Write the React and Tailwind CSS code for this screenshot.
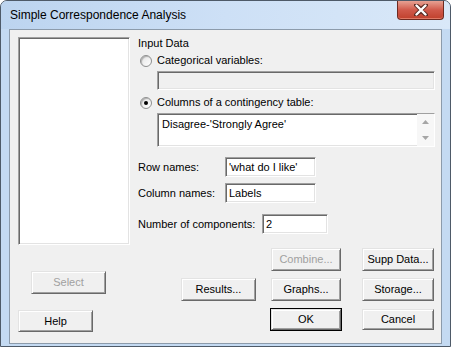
const sunken =
  'border border-t-[#a0a0a0] border-l-[#a0a0a0] border-r-white border-b-white shadow-[inset_1px_1px_0_#696969,inset_-1px_-1px_0_#e3e3e3]'

const btnBase =
  'flex items-center justify-center bg-[#f0f0f0] border border-t-[#e3e3e3] border-l-[#e3e3e3] border-r-[#696969] border-b-[#696969] shadow-[inset_1px_1px_0_#ffffff,inset_-1px_-1px_0_#a0a0a0]'

const Btn = ({ children, w = 'w-[75px]', h = 'h-[23px]', disabled, isDefault, className = '' }) => (
  <div
    className={`${w} ${h} ${className} ${
      isDefault ? 'outline outline-1 outline-black' : ''
    } ${btnBase} ${disabled ? 'text-[#a0a0a0]' : 'text-black'}`}
  >
    {children}
  </div>
)

const Radio = ({ checked }) => (
  <div className="ml-[2px] w-[12px] h-[12px] rounded-full border border-[#8e8f8f] bg-gradient-to-br from-[#e3e3e3] to-white flex items-center justify-center shadow-[inset_1px_1px_1px_#b0b0b0]">
    {checked && <div className="w-[4px] h-[4px] rounded-full bg-black" />}
  </div>
)

const Field = ({ w, h = 'h-[20px]', value }) => (
  <div className={`${w} ${h} ${sunken} bg-white pl-[3px] flex items-center`}>
    {value}
  </div>
)

export default function App() {
  return (
    <div
      className="w-[451px] h-[347px] border border-[#4e5a68] rounded-t-[7px] bg-[#c4daf2] flex flex-col overflow-hidden text-[11px] leading-[13px] text-black"
      style={{ fontFamily: '"Liberation Sans", Arial, sans-serif' }}
    >
      {/* title bar */}
      <div className="h-[28px] flex justify-between items-start bg-gradient-to-r from-[#bcd4ef] via-[#cde0f6] to-[#d9e8f8]">
        <div className="pl-[9px] pt-[7px] text-[12px] leading-[14px] text-black">
          Simple Correspondence Analysis
        </div>
        <div className="mr-[6px] w-[47px] h-[19px] rounded-b-[4px] border border-t-0 border-[#6e2a20] bg-gradient-to-b from-[#e6a193] via-[#d0594a] to-[#c0402c] flex items-center justify-center shadow-[inset_0_-1px_0_#e07a66]">
          <svg width="14" height="12" viewBox="0 0 14 12">
            <path
              d="M2 1 L7 5 L12 1 M2 11 L7 7 L12 11 M2 1 L12 11 M12 1 L2 11"
              stroke="#5a2a22"
              strokeWidth="4"
              strokeLinecap="round"
              fill="none"
            />
            <path
              d="M2.5 1.5 L11.5 10.5 M11.5 1.5 L2.5 10.5"
              stroke="#ffffff"
              strokeWidth="2.4"
              strokeLinecap="round"
              fill="none"
            />
          </svg>
        </div>
      </div>

      {/* client area */}
      <div className="mx-[8px] h-[315px] border border-[#8c9bab] bg-[#f0f0f0] flex">
        {/* left column */}
        <div className="w-[120px] pl-[8px] flex flex-col">
          <div className={`mt-[7px] w-[112px] h-[208px] bg-white ${sunken}`} />
          <Btn className="mt-[26px] ml-[13px]" disabled>
            Select
          </Btn>
          <Btn className="mt-[16px]" h="h-[22px]">
            Help
          </Btn>
        </div>

        {/* right column */}
        <div className="ml-[8px] flex-1 flex flex-col">
          <div className="mt-[7px] h-[13px]">Input Data</div>

          <div className="mt-[4px] h-[13px] flex items-center">
            <Radio />
            <span className="ml-[5px]">Categorical variables:</span>
          </div>
          <div className={`mt-[4px] ml-[19px] w-[278px] h-[19px] bg-[#f0f0f0] ${sunken}`} />

          <div className="mt-[6px] h-[13px] flex items-center">
            <Radio checked />
            <span className="ml-[5px]">Columns of a contingency table:</span>
          </div>
          <div className={`mt-[4px] ml-[19px] w-[278px] h-[34px] bg-white flex ${sunken}`}>
            <div className="flex-1 pl-[4px] pt-[4px]">Disagree-'Strongly Agree'</div>
            <div className="w-[17px] bg-[#f7f7f7] flex flex-col items-center justify-between py-[6px]">
              <svg width="7" height="4" viewBox="0 0 7 4">
                <path d="M0 4 L3.5 0 L7 4 Z" fill="#a6a6a6" />
              </svg>
              <svg width="7" height="4" viewBox="0 0 7 4">
                <path d="M0 0 L3.5 4 L7 0 Z" fill="#a6a6a6" />
              </svg>
            </div>
          </div>

          <div className="mt-[10px] h-[20px] flex items-center">
            <span className="w-[87px]">Row names:</span>
            <Field w="w-[91px]" value="'what do I like'" />
          </div>
          <div className="mt-[6px] h-[20px] flex items-center">
            <span className="w-[87px]">Column names:</span>
            <Field w="w-[91px]" value="Labels" />
          </div>
          <div className="mt-[11px] h-[20px] flex items-center">
            <span className="w-[124px]">Number of components:</span>
            <Field w="w-[66px]" value="2" />
          </div>

          {/* buttons */}
          <div className="mt-[14px] flex pl-[43px]">
            <div className="w-[75px]" />
            <Btn w="w-[70px]" className="ml-[15px]" disabled>
              Combine...
            </Btn>
            <Btn w="w-[72px]" className="ml-[21px]">
              Supp Data...
            </Btn>
          </div>
          <div className="mt-[7px] flex pl-[43px]">
            <Btn>Results...</Btn>
            <Btn w="w-[70px]" className="ml-[15px]">
              Graphs...
            </Btn>
            <Btn w="w-[72px]" className="ml-[21px]">
              Storage...
            </Btn>
          </div>
          <div className="mt-[8px] flex pl-[43px]">
            <div className="w-[75px]" />
            <Btn w="w-[70px]" h="h-[21px]" className="ml-[15px]" isDefault>
              OK
            </Btn>
            <Btn w="w-[72px]" h="h-[21px]" className="ml-[21px]">
              Cancel
            </Btn>
          </div>
        </div>
      </div>
    </div>
  )
}
